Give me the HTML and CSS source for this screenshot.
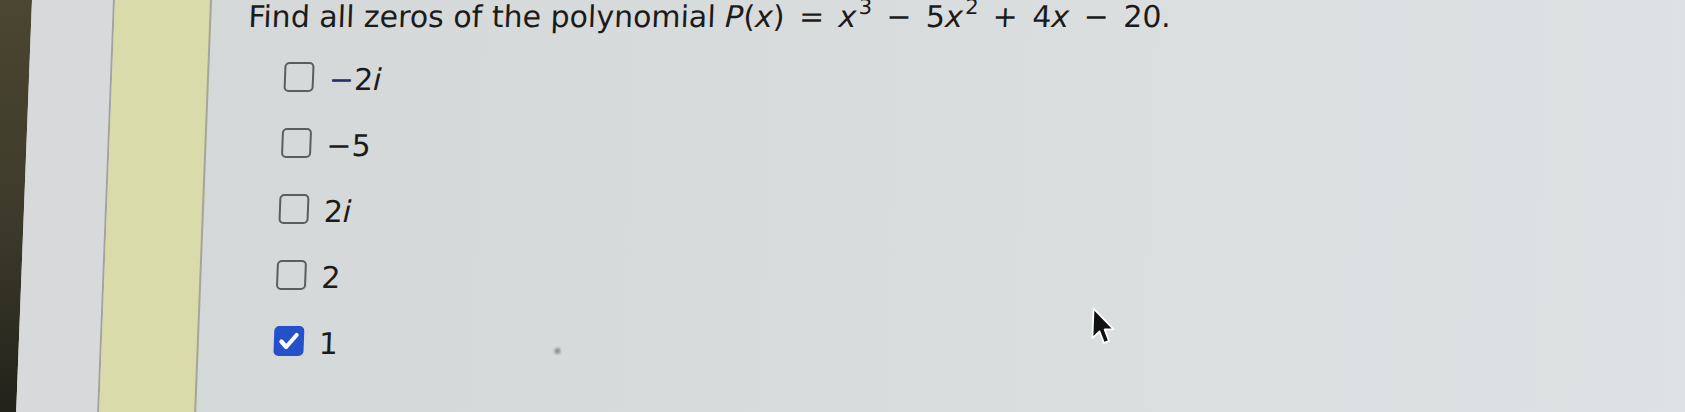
FILE: index.html
```html
<!DOCTYPE html>
<html>
<head>
<meta charset="utf-8">
<link rel="stylesheet" href="styles.css">
</head>
<body>
<div class="screen">
  <div class="edge"></div>
  <div class="strip-gray"></div>
  <div class="strip-yellow"></div>
  <main class="content">
    <h1 class="question">Find all zeros of the polynomial <span class="math"><i>P</i>(<i>x</i>)<span class="op">=</span><i>x</i><sup>3</sup><span class="op">−</span>5<i>x</i><sup>2</sup><span class="op">+</span>4<i>x</i><span class="op">−</span>20.</span></h1>
    <ul class="options">
      <li class="option"><span class="box"></span><span class="label"><span class="minus">−</span>2<i>i</i></span></li>
      <li class="option"><span class="box"></span><span class="label">−5</span></li>
      <li class="option"><span class="box"></span><span class="label">2<i>i</i></span></li>
      <li class="option"><span class="box"></span><span class="label">2</span></li>
      <li class="option"><span class="box checked"><svg viewBox="0 0 30 30" width="30" height="30"><path d="M7.5 15.5 L12.5 21 L22.5 9" fill="none" stroke="#ffffff" stroke-width="4.2" stroke-linecap="round" stroke-linejoin="round"/></svg></span><span class="label">1</span></li>
    </ul>
    <span class="dust"></span>
    <svg class="cursor" viewBox="0 0 22 34" width="27" height="42"><path d="M2 2 L2 26 L7.5 20.5 L11.5 30 L15.5 28.3 L11.6 19 L19 19 Z" fill="#111" stroke="#fff" stroke-width="1.4" stroke-linejoin="round"/></svg>
  </main>
</div>
</body>
</html>
```
FILE: styles.css
```css
html, body {
  margin: 0;
  padding: 0;
  width: 1685px;
  height: 412px;
  overflow: hidden;
  background: #d6d9da;
}
.screen {
  display: flex;
  height: 412px;
  width: 1720px;
  transform: skewX(-2.2deg);
  transform-origin: 0 0;
  background: linear-gradient(90deg, #d4d7d7 0%, #d8dbdb 40%, #dee2e4 100%);
}
.edge {
  width: 32px;
  flex: none;
  background: linear-gradient(180deg, #4b4631 0%, #3c3a2a 55%, #22221b 100%);
}
.strip-gray {
  width: 81px;
  flex: none;
  background: #d8d9da;
  border-right: 2px solid #a3a4a2;
}
.strip-yellow {
  width: 95px;
  flex: none;
  background: #d9dbab;
  border-right: 2px solid #a4a69a;
}
.content {
  flex: 1;
  position: relative;
  padding-left: 37px;
  font-family: "DejaVu Sans", Verdana, sans-serif;
  color: #1b1b1b;
}
.question {
  margin: 0;
  padding-top: 0;
  font-size: 30px;
  line-height: 34px;
  font-weight: normal;
  white-space: nowrap;
}
.math i {
  font-style: italic;
}
.math .op {
  padding: 0 14.5px;
}
.math sup {
  font-size: 0.7em;
  line-height: 0;
  vertical-align: 0.6em;
  padding-left: 2px;
}
.options {
  list-style: none;
  margin: 10px 0 0 0;
  padding: 0;
}
.option {
  display: flex;
  align-items: center;
  height: 66px;
}
.box {
  width: 26px;
  height: 26px;
  border: 2px solid #5c5d5d;
  border-radius: 5px;
  margin-left: 38px;
  flex: none;
  display: flex;
}
.box.checked {
  border-color: #2450cc;
  background: #2450cc;
}
.box.checked svg {
  margin: -2px;
}
.label {
  margin-left: 15px;
  margin-top: 6px;
  font-size: 30px;
  line-height: 30px;
  white-space: nowrap;
}
.label i {
  font-style: italic;
}
.minus {
  color: #2b2b66;
}
.dust {
  position: absolute;
  left: 356px;
  top: 348px;
  width: 6px;
  height: 6px;
  border-radius: 50%;
  background: #8d9193;
  filter: blur(1px);
}
.cursor {
  position: absolute;
  left: 891px;
  top: 306px;
}
```
